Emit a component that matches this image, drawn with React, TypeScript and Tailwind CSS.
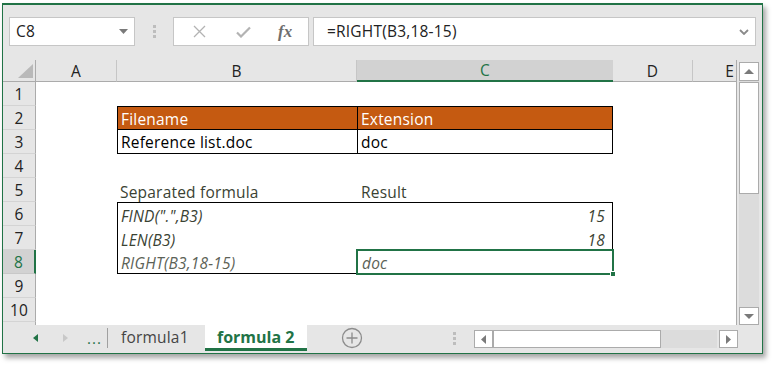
import React from 'react'

const font = { fontFamily: '"Open Sans", "Liberation Sans", sans-serif' }

function RowHead({ n, active }: { n: number; active?: boolean }) {
  return (
    <div
      className={
        active
          ? 'w-[33px] shrink-0 h-full flex items-center justify-center pt-[1px] bg-[#d2d2d2] text-[#217346] border-b border-b-[#c8c8c8] border-r-2 border-r-[#217346]'
          : 'w-[33px] shrink-0 h-full flex items-center justify-center pt-[1px] bg-[#e6e6e6] text-[#222] border-b border-b-[#d4d4d4] border-r border-r-[#ababab]'
      }
    >
      {n}
    </div>
  )
}

function Row({ n, active, children }: { n: number; active?: boolean; children?: React.ReactNode }) {
  return (
    <div className="flex h-[24px] shrink-0 leading-[20px]">
      <RowHead n={n} active={active} />
      {children ?? <div className="w-[81px] shrink-0" />}
    </div>
  )
}

export default function App() {
  return (
    <div className="w-[772px] h-[365px] bg-white overflow-hidden pt-[3px] pl-[2px]" style={font}>
      <div className="w-[761px] h-[351px] bg-[#e6e6e6] border-x border-t-2 border-b border-[#217346] flex flex-col shadow-[3px_4px_5px_rgba(0,0,0,0.35)] text-[15.5px] tracking-[0.2px]">
        {/* formula bar */}
        <div className="flex items-center h-[29px] mt-[12px] pl-[6px] shrink-0">
          <div className="w-[126px] h-full bg-white border border-[#c6c6c6] flex items-center pl-[6px] pr-[6px] justify-between">
            <span className="text-[#222]">C8</span>
            <svg width="9" height="5" viewBox="0 0 9 5"><path d="M0 0h9L4.5 5z" fill="#7a7a7a" /></svg>
          </div>
          <div className="w-[38px] flex flex-col items-center gap-[2px]">
            <span className="w-[3px] h-[3px] bg-[#bdbdbd]" />
            <span className="w-[3px] h-[3px] bg-[#bdbdbd]" />
            <span className="w-[3px] h-[3px] bg-[#bdbdbd]" />
          </div>
          <div className="w-[136px] h-full bg-white border border-[#c6c6c6] flex items-center">
            <svg className="ml-[19px]" width="13" height="13" viewBox="0 0 13 13">
              <path d="M1 1l11 11M12 1L1 12" stroke="#b3b3b3" strokeWidth="1.3" />
            </svg>
            <svg className="ml-[30px]" width="15" height="12" viewBox="0 0 15 12">
              <path d="M1 6.5l4 4L14 1.5" stroke="#b3b3b3" strokeWidth="2.2" fill="none" />
            </svg>
            <span
              className="ml-[27px] text-[#6e6e6e] italic font-bold text-[17px] tracking-normal"
              style={{ fontFamily: '"Liberation Serif", serif' }}
            >
              fx
            </span>
          </div>
          <div className="w-[443px] h-full ml-[4px] bg-white border border-[#c6c6c6] flex items-center justify-between pl-[13px] pr-[6px]">
            <span className="text-[#222]">=RIGHT(B3,18-15)</span>
            <svg width="10" height="6" viewBox="0 0 10 6"><path d="M1 1l4 4 4-4" stroke="#8a8a8a" strokeWidth="1.8" fill="none" /></svg>
          </div>
        </div>

        {/* sheet */}
        <div className="flex mt-[14px] h-[265px] shrink-0">
          <div className="w-[734px] shrink-0 flex flex-col border-r border-[#ababab] overflow-hidden">
            {/* column headers */}
            <div className="flex h-[22px] shrink-0 text-[#222] leading-[18px]">
              <div className="w-[33px] shrink-0 h-full relative border-r border-b border-[#ababab]">
                <svg className="absolute right-[2px] bottom-[3px]" width="15" height="14" viewBox="0 0 15 14">
                  <path d="M15 0v14H0z" fill="#b9b9b9" />
                </svg>
              </div>
              <div className="w-[81px] shrink-0 flex items-center justify-center border-r border-b border-r-[#c6c6c6] border-b-[#ababab]">A</div>
              <div className="w-[240px] shrink-0 flex items-center justify-center border-r border-b border-r-[#c6c6c6] border-b-[#ababab]">B</div>
              <div className="w-[256px] shrink-0 flex items-center justify-center bg-[#d2d2d2] text-[#217346] border-b-2 border-[#217346]">C</div>
              <div className="w-[80px] shrink-0 flex items-center justify-center border-r border-b border-r-[#c6c6c6] border-b-[#ababab]">D</div>
              <div className="flex-1 flex items-center justify-end pr-[2px] border-b border-[#ababab]">E</div>
            </div>

            {/* rows */}
            <div className="flex flex-col bg-white flex-1 overflow-hidden">
              <Row n={1} />
              <Row n={2}>
                <div className="w-[81px] shrink-0" />
                <div className="w-[240px] shrink-0 bg-[#c55a11] text-white border-l border-t border-b border-black px-[3px] pt-[1px] flex items-center">Filename</div>
                <div className="w-[256px] shrink-0 bg-[#c55a11] text-white border border-black px-[3px] pt-[1px] flex items-center">Extension</div>
              </Row>
              <Row n={3}>
                <div className="w-[81px] shrink-0" />
                <div className="w-[240px] shrink-0 text-black border-l border-b border-black px-[3px] pt-[1px] flex items-center">Reference list.doc</div>
                <div className="w-[256px] shrink-0 text-black border-x border-b border-black px-[3px] pt-[1px] flex items-center">doc</div>
              </Row>
              <Row n={4} />
              <Row n={5}>
                <div className="w-[81px] shrink-0" />
                <div className="w-[240px] shrink-0 text-[#3a4233] px-[3px] pt-[3px] flex items-center">Separated formula</div>
                <div className="w-[256px] shrink-0 text-[#3a4233] px-[4px] pt-[3px] flex items-center">Result</div>
              </Row>
              <Row n={6}>
                <div className="w-[81px] shrink-0" />
                <div className="w-[240px] shrink-0 italic text-[#3a4233] border-l border-t border-black px-[3px] pt-[2px] flex items-center">FIND(".",B3)</div>
                <div className="w-[256px] shrink-0 italic text-[#3a4233] border-r border-t border-black px-[7px] pt-[2px] flex items-center justify-end">15</div>
              </Row>
              <Row n={7}>
                <div className="w-[81px] shrink-0" />
                <div className="w-[240px] shrink-0 italic text-[#3a4233] border-l border-black px-[3px] pt-[3px] flex items-center">LEN(B3)</div>
                <div className="w-[256px] shrink-0 italic text-[#3a4233] border-r border-black px-[7px] pt-[3px] flex items-center justify-end">18</div>
              </Row>
              <Row n={8} active>
                <div className="w-[81px] shrink-0" />
                <div className="w-[240px] shrink-0 italic text-[#5c6257] border-l border-b border-black px-[3px] pt-[2px] flex items-center">RIGHT(B3,18-15)</div>
                <div className="w-[256px] shrink-0 relative italic text-[#5c6257] px-[5px] pt-[2px] flex items-center">
                  doc
                  <div className="absolute -left-[1px] -top-[1px] -right-[1px] -bottom-[1px] border-2 border-[#217346]" />
                  <div className="absolute -right-[3px] -bottom-[3px] w-[6px] h-[6px] bg-[#217346] border border-white" />
                </div>
              </Row>
              <Row n={9} />
              <Row n={10} />
              <Row n={11} />
            </div>
          </div>

          {/* vertical scrollbar */}
          <div className="flex-1 flex flex-col pl-[2px] pr-[3px] pt-[2px]">
            <div className="h-[19px] bg-white border border-[#ababab] flex items-center justify-center">
              <svg width="10" height="5" viewBox="0 0 10 5"><path d="M0 5h10L5 0z" fill="#7a7a7a" /></svg>
            </div>
            <div className="flex-1 bg-[#dcdcdc] flex flex-col">
              <div className="h-[112px] mt-[1px] bg-white border border-[#ababab]" />
            </div>
            <div className="h-[18px] bg-white border border-[#ababab] flex items-center justify-center">
              <svg width="10" height="5" viewBox="0 0 10 5"><path d="M0 0h10L5 5z" fill="#7a7a7a" /></svg>
            </div>
          </div>
        </div>

        {/* sheet tabs */}
        <div className="flex h-[26px] shrink-0 items-stretch leading-[20px]">
          <div className="w-[104px] shrink-0 flex items-center">
            <svg className="ml-[30px]" width="5" height="8" viewBox="0 0 5 8"><path d="M5 0v8L0 4z" fill="#217346" /></svg>
            <svg className="ml-[25px]" width="5" height="8" viewBox="0 0 5 8"><path d="M0 0v8l5-4z" fill="#c8c8c8" /></svg>
            <span className="ml-[19px] text-[#217346] text-[15px] tracking-[1px]">...</span>
          </div>
          <div className="w-[1px] my-[3px] bg-[#a0a0a0]" />
          <div className="w-[97px] shrink-0 flex items-center pl-[13px] text-[#444] pb-[2px]">formula1</div>
          <div className="w-[102px] shrink-0 bg-white border-b-[3px] border-[#217346] flex items-center pl-[12px] font-bold text-[#217346] text-[16px] tracking-normal">formula 2</div>
          <div className="w-[88px] shrink-0 flex items-center justify-center pl-[2px]">
            <svg width="22" height="22" viewBox="0 0 22 22">
              <circle cx="11" cy="11" r="9.5" fill="none" stroke="#8c8c8c" strokeWidth="1.3" />
              <path d="M11 5.5v11M5.5 11h11" stroke="#8c8c8c" strokeWidth="1.3" />
            </svg>
          </div>
          <div className="flex-1" />
          <div className="w-[20px] flex flex-col items-center justify-center gap-[2px]">
            <span className="w-[3px] h-[3px] bg-[#bdbdbd]" />
            <span className="w-[3px] h-[3px] bg-[#bdbdbd]" />
            <span className="w-[3px] h-[3px] bg-[#bdbdbd]" />
          </div>
          <div className="w-[264px] shrink-0 flex items-start pt-[5px] ml-[10px] mr-[24px]">
            <div className="w-[19px] h-[18px] bg-white border border-[#ababab] flex items-center justify-center">
              <svg width="5" height="9" viewBox="0 0 5 9"><path d="M5 0v9L0 4.5z" fill="#7a7a7a" /></svg>
            </div>
            <div className="flex-1 h-[18px] bg-[#dcdcdc] flex">
              <div className="w-[168px] h-full bg-white border border-[#ababab]" />
            </div>
            <div className="w-[19px] h-[18px] ml-[2px] bg-white border border-[#ababab] flex items-center justify-center">
              <svg width="5" height="9" viewBox="0 0 5 9"><path d="M0 0v9l5-4.5z" fill="#7a7a7a" /></svg>
            </div>
          </div>
        </div>
      </div>
    </div>
  )
}
